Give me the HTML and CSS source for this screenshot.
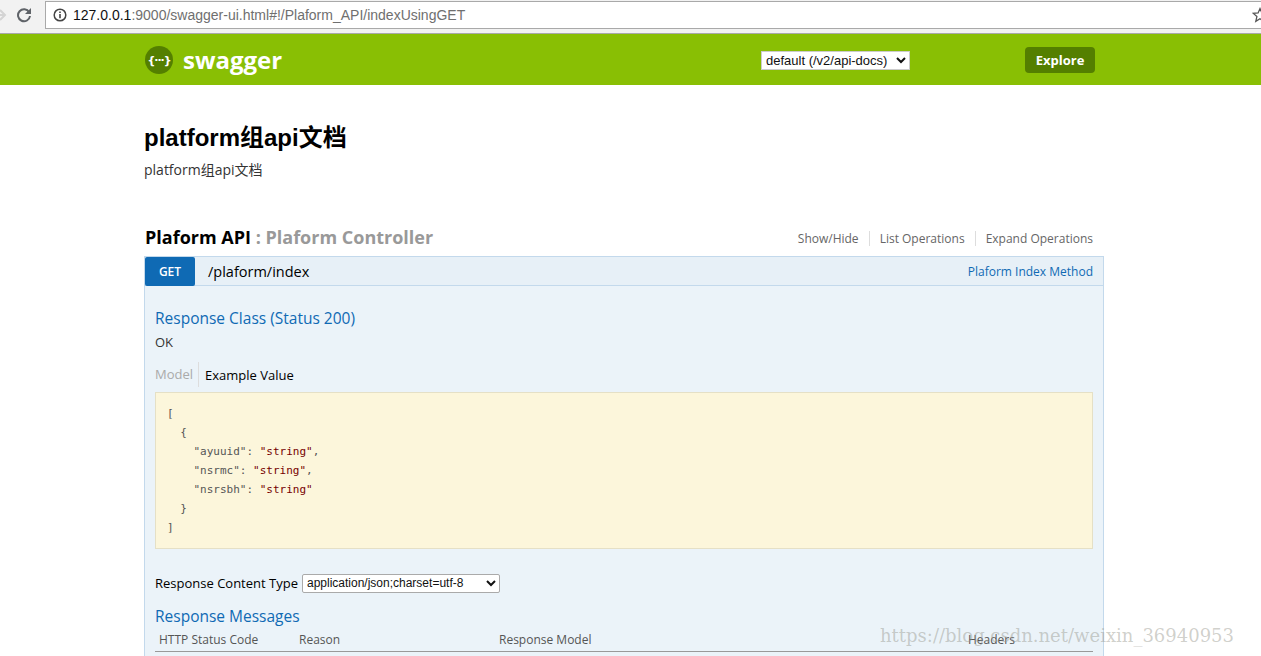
FILE: index.html
```html
<!DOCTYPE html>
<html lang="zh">
<head>
<meta charset="utf-8">
<title>Swagger UI</title>
<link rel="stylesheet" href="styles.css">
</head>
<body>
<div class="chrome">
  <div class="nav">
    <svg class="ic-back" width="10" height="16" viewBox="0 0 10 16"><path d="M0 8h8M3 3 8 8l-5 5" fill="none" stroke="#d4d4d4" stroke-width="2"/></svg>
    <svg class="ic-reload" width="16" height="16" viewBox="0 0 16 16"><path d="M13.2 5.2A6 6 0 1 0 14 9" fill="none" stroke="#5f6368" stroke-width="2"/><path d="M15 1v6H9z" fill="#5f6368"/></svg>
  </div>
  <div class="omnibox">
    <svg class="ic-info" width="14" height="14" viewBox="0 0 14 14"><circle cx="7" cy="7" r="5.8" fill="none" stroke="#444" stroke-width="1.5"/><path d="M7 6v4.2M7 3.4v1.5" stroke="#444" stroke-width="1.6"/></svg>
    <span class="url"><span class="host">127.0.0.1</span>:9000/swagger-ui.html#!/Plaform_API/indexUsingGET</span>
    <svg class="ic-star" width="16" height="16" viewBox="0 0 16 16"><path d="M8 1.6 9.9 6l4.8.4-3.6 3.2 1.1 4.7L8 11.8l-4.2 2.5 1.1-4.7L1.300 6.400 6.100 6z" fill="none" stroke="#555" stroke-width="1.300"/></svg>
  </div>
</div>

<header class="topbar">
  <div class="topbar-inner">
    <a class="logo">
      <span class="logo-badge">{···}</span>
      <span class="logo-text">swagger</span>
    </a>
    <select class="spec-select"><option>default (/v2/api-docs)</option></select>
    <button class="explore">Explore</button>
  </div>
</header>

<main class="container">
  <section class="info">
    <h1>platform组api文档</h1>
    <p>platform组api文档</p>
  </section>

  <div class="resource-head">
    <h2>Plaform API <span class="desc">: Plaform Controller</span></h2>
    <ul class="actions">
      <li>Show/Hide</li>
      <li>List Operations</li>
      <li>Expand Operations</li>
    </ul>
  </div>

  <section class="operation">
    <div class="op-head">
      <span class="method">GET</span>
      <span class="path">/plaform/index</span>
      <span class="summary">Plaform Index Method</span>
    </div>
    <div class="op-body">
      <h4 class="first">Response Class (Status 200)</h4>
      <div class="ok">OK</div>
      <div class="tabs"><span class="tab off">Model</span><span class="tab on">Example Value</span></div>
      <pre class="snippet"><span class="p">[
  {
    </span><span class="k">"ayuuid"</span><span class="p">: </span><span class="s">"string"</span><span class="p">,
    </span><span class="k">"nsrmc"</span><span class="p">: </span><span class="s">"string"</span><span class="p">,
    </span><span class="k">"nsrsbh"</span><span class="p">: </span><span class="s">"string"</span><span class="p">
  }
]</span></pre>
      <div class="ctype">
        <label>Response Content Type</label>
        <select class="ctype-select"><option>application/json;charset=utf-8</option></select>
      </div>
      <h4 class="messages">Response Messages</h4>
      <table class="resp">
        <thead><tr><th class="c1">HTTP Status Code</th><th class="c2">Reason</th><th class="c3">Response Model</th><th>Headers</th></tr></thead>
      </table>
    </div>
  </section>
</main>
<div class="watermark">https://blog.csdn.net/weixin_36940953</div>
</body>
</html>
```
FILE: styles.css
```css
* { box-sizing: border-box; }
html, body { margin: 0; padding: 0; height: 656px; overflow: hidden; background: #fff; }
body { font-family: "Open Sans", "Noto Sans CJK SC", sans-serif; position: relative; }

.chrome { height: 34px; background: #f2f2f2; border-bottom: 1px solid #a9a9a9; display: flex; align-items: flex-start; padding-top: 1px; }
.nav { width: 45px; height: 28px; display: flex; align-items: center; gap: 9px; }
.ic-back { margin-left: -3px; }
.omnibox { flex: 1; height: 28px; background: #fff; border: 1px solid #a9a9a9; border-right: 0; display: flex; align-items: center; padding-left: 7px; gap: 6px; margin-right: -8px; }
.url { font-family: "Liberation Sans", sans-serif; font-size: 14px; color: #6f6f6f; flex: 1; }
.host { color: #111; }
.ic-star { margin-right: 1px; }

.topbar { height: 51px; background: #89bf04; }
.topbar-inner { width: 960px; margin-left: 145px; height: 100%; display: flex; align-items: center; position: relative; }
.logo { display: flex; align-items: center; gap: 10px; width: 616px; margin-top: 3px; margin-top: 1px; }
.logo-badge { width: 28px; height: 28px; border-radius: 50%; background: #547f00; color: #fff; font-size: 11px; font-weight: 600; display: flex; align-items: center; justify-content: center; letter-spacing: -1px; font-family: "DejaVu Sans", sans-serif; }
.logo-text { font-size: 24px; font-weight: 700; color: #fff; line-height: 28px; }
.spec-select { width: 149px; height: 19px; font-family: "Liberation Sans", sans-serif; font-size: 13px; border: 1px solid #ccc; background: #fff; padding: 0; color: #111; margin-top: 1px; border-radius: 0; }
.explore { margin-left: 115px; width: 70px; height: 26px; background: #547f00; color: #fff; border: 0; border-radius: 4px; font-family: "Open Sans", sans-serif; font-weight: 700; font-size: 13px; padding: 0; }

.container { width: 960px; margin-left: 144px; }
.info { padding-top: 38px; height: 135px; }
.info h1 { margin: 0; font-size: 24px; line-height: 30px; font-weight: 700; color: #000; font-family: "Liberation Sans", "Noto Sans CJK SC", sans-serif; }
.info p { margin: 7px 0 0; font-size: 14px; line-height: 20px; color: #333; }

.resource-head { display: flex; justify-content: space-between; align-items: flex-end; height: 36px; padding: 0 11px 0 1px; }
.resource-head h2 { margin: 0 0 7px; font-size: 18px; line-height: 24px; font-weight: 700; color: #000; }
.desc { color: #999; }
.actions { list-style: none; margin: 0 0 10px; padding: 0; display: flex; font-size: 12px; color: #666; }
.actions li { padding: 0 10px; border-right: 1px solid #ddd; line-height: 15px; }
.actions li:last-child { border-right: 0; padding-right: 0; }

.operation { margin-left: 0; width: 960px; }
.op-head { height: 30px; background: #e7f0f7; border: 1px solid #c3d9ec; display: flex; align-items: center; }
.method { width: 50px; height: 29px; background: #0f6ab4; color: #fff; font-size: 12px; font-weight: 600; border-radius: 2px; display: flex; align-items: center; justify-content: center; align-self: flex-start; }
.path { margin-left: 13px; font-size: 14.5px; color: #000; flex: 1; }
.summary { font-size: 12px; color: #0f6ab4; margin-right: 10px; }
.op-body { background: #ebf3f9; border: 1px solid #c3d9ec; border-top: 0; padding: 0 10px; height: 400px; }
h4 { margin: 0; font-weight: 400; font-size: 15.500px; color: #0f6ab4; }
h4.first { padding-top: 21px; line-height: 22px; }
.ok { font-size: 13px; line-height: 18px; color: #333; margin-top: 4px; }
.tabs { display: flex; margin-top: 11px; height: 25px; align-items: center; font-size: 13px; }
.tab.off { color: #aaa; padding-right: 5px; border-right: 1px solid #ddd; line-height: 25px; }
.tab.on { color: #000; padding-left: 6px; }
.snippet { margin: 5px 0 0; height: 157px; background: #fcf6db; border: 1px solid #e5e0c6; padding: 11px; font-family: "DejaVu Sans Mono", monospace; font-size: 11px; line-height: 19px; }
.p { color: #555; }
.k { color: #555; }
.s { color: #760000; }
.ctype { display: flex; align-items: center; margin-top: 24px; height: 20px; font-size: 13px; color: #000; }
.ctype-select { margin-left: 4px; width: 198px; height: 19px; font-family: "Liberation Sans", sans-serif; font-size: 12px; padding: 0; background: #fff; border: 1px solid #aaa; border-radius: 2px; color: #111; }
h4.messages { margin-top: 12px; line-height: 22px; }
.resp { width: 938px; border-collapse: collapse; margin-top: 2px; }
.resp th { text-align: left; font-weight: 400; font-size: 12px; color: #555; padding: 0 4px; height: 22px; border-bottom: 1px solid #999; }
.c1 { width: 140px; } .c2 { width: 200px; } .c3 { width: 469px; }

.watermark { position: absolute; left: 880px; top: 625px; font-family: "DejaVu Serif", serif; font-size: 18px; color: rgba(150,150,140,.45); white-space: nowrap; }
```
